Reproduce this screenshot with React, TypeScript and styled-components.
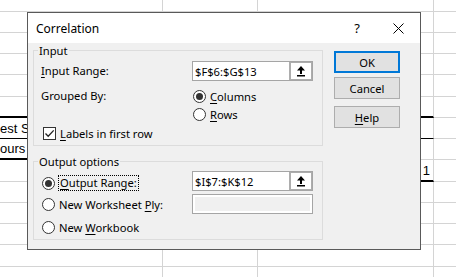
import React from 'react'
import styled, { createGlobalStyle } from 'styled-components'

const GlobalStyle = createGlobalStyle`
  html, body {
    margin: 0;
    padding: 0;
    background: #fff;
  }
  body {
    width: 456px;
    height: 277px;
    overflow: hidden;
  }
`

const Screen = styled.div`
  position: relative;
  width: 456px;
  height: 277px;
  overflow: hidden;
`

// spreadsheet behind the dialog
const Sheet = styled.div`
  display: grid;
  grid-template-columns: 163px 95px 176px 22px;
  grid-template-rows: 12px repeat(3, 21px 21px 21px 22px) 10px;
  font-family: "Liberation Sans", Arial, sans-serif;
  font-size: 13px;
  color: #000;
`

type Edge = 'grid' | 'thin' | 'thick' | 'none'

const Cell = styled.div<{ $edge: Edge; $last?: boolean; $right?: boolean }>`
  box-sizing: border-box;
  display: flex;
  align-items: flex-end;
  justify-content: ${p => (p.$right ? 'flex-end' : 'flex-start')};
  padding: 0 3px 2px 0;
  line-height: 15px;
  white-space: nowrap;
  overflow: hidden;
  border-right: ${p => (p.$last ? 'none' : '1px solid #d4d4d4')};
  border-bottom: ${p =>
    p.$edge === 'thick'
      ? '2px solid #000'
      : p.$edge === 'thin'
        ? '1px solid #000'
        : p.$edge === 'none'
          ? 'none'
          : '1px solid #d4d4d4'};
`

const Dialog = styled.div`
  position: absolute;
  left: 27px;
  top: 12px;
  width: 394px;
  height: 238px;
  box-sizing: border-box;
  border: 1px solid #595959;
  background: #f0f0f0;
  display: flex;
  flex-direction: column;
  font-family: "Noto Sans", "Open Sans", sans-serif;
  font-size: 11.2px;
  color: #000;
`

const TitleBar = styled.div`
  height: 30px;
  flex: none;
  background: #fff;
  display: flex;
  align-items: center;
  padding: 0 16px 0 8px;
  font-size: 12px;
`

const Title = styled.div`
  flex: 1;
`

const HelpMark = styled.div`
  margin-right: 33px;
  font-size: 13px;
`

const Body = styled.div`
  flex: 1;
  display: flex;
  padding: 0 0 0 5px;
`

const Options = styled.div`
  width: 290px;
  display: flex;
  flex-direction: column;
`

const Group = styled.fieldset`
  margin: 0;
  padding: 0 0 3px 7px;
  border: 1px solid #dcdcdc;
  min-width: 0;

  & + & {
    margin-top: 8px;
  }
`

const Caption = styled.legend`
  padding: 0 1px;
  margin-left: -3px;
  line-height: 15px;
`

const FieldRow = styled.div<{ $top?: number }>`
  display: grid;
  grid-template-columns: 151px 121px;
  align-items: center;
  margin-top: ${p => p.$top ?? 0}px;
`

const Label = styled.div<{ $h?: number }>`
  align-self: start;
  line-height: ${p => p.$h ?? 20}px;
`

const RangeBox = styled.div<{ $disabled?: boolean }>`
  box-sizing: border-box;
  width: 121px;
  height: 20px;
  border: 1px solid #a5a5a5;
  background: ${p => (p.$disabled ? '#f0f0f0' : '#fff')};
  box-shadow: ${p => (p.$disabled ? 'inset 0 0 0 2px #fff' : 'none')};
  display: flex;
  align-items: center;
`

const RangeText = styled.div`
  flex: 1;
  padding-left: 2px;
`

const RefButton = styled.div`
  box-sizing: border-box;
  width: 23px;
  height: 18px;
  border: 1px solid #adadad;
  border-left-width: 2px;
  background: #fff;
  display: flex;
  align-items: center;
  justify-content: center;
`

const Stack = styled.div`
  display: flex;
  flex-direction: column;
`

const BoxStack = styled(Stack)`
  align-self: start;
  gap: 3px;
  margin-top: 2px;
`

const Option = styled.div<{ $top?: number; $indent?: number }>`
  display: flex;
  align-items: center;
  height: 18px;
  gap: 4px;
  margin-top: ${p => p.$top ?? 0}px;
  margin-left: ${p => p.$indent ?? 0}px;
`

const Radio = styled.span<{ $on?: boolean }>`
  box-sizing: border-box;
  width: 13px;
  height: 13px;
  flex: none;
  border: 1px solid #333;
  border-radius: 50%;
  background: #fff;
  display: flex;
  align-items: center;
  justify-content: center;

  &::after {
    content: '';
    width: 7px;
    height: 7px;
    border-radius: 50%;
    background: ${p => (p.$on ? '#333' : 'transparent')};
  }
`

const Check = styled.span`
  box-sizing: border-box;
  width: 13px;
  height: 13px;
  flex: none;
  border: 1px solid #333;
  background: #fff;
  display: flex;
  align-items: center;
  justify-content: center;
`

const Focused = styled.span`
  outline: 1px dotted #000;
  outline-offset: 0;
  padding: 0 1px;
  line-height: 14px;
`

const Key = styled.span`
  text-decoration: underline;
  text-underline-offset: 2px;
  text-decoration-thickness: 1px;
`

const Buttons = styled.div`
  width: 66px;
  margin-left: 11px;
  padding-top: 8px;
  display: flex;
  flex-direction: column;
`

const Button = styled.div<{ $default?: boolean; $top?: number }>`
  box-sizing: border-box;
  height: 22px;
  margin-top: ${p => p.$top ?? 0}px;
  border: ${p => (p.$default ? '2px solid #0078d7' : '1px solid #adadad')};
  background: #e1e1e1;
  display: flex;
  align-items: center;
  justify-content: center;
`

const UpArrow = () => (
  <svg width="8" height="11" viewBox="0 0 8 11">
    <path d="M4 0 L8 4.5 L5 4.5 L5 8 L3 8 L3 4.5 L0 4.5 Z" fill="#000" />
    <rect x="0" y="9" width="8" height="1.5" fill="#000" />
  </svg>
)

const CloseIcon = () => (
  <svg width="11" height="11" viewBox="0 0 11 11">
    <path d="M0.5 0.5 L10.5 10.5 M10.5 0.5 L0.5 10.5" stroke="#000" strokeWidth="1" />
  </svg>
)

const Tick = () => (
  <svg width="11" height="11" viewBox="0 0 11 11">
    <path d="M1.5 5.5 L4.2 8.3 L9.7 2.4" stroke="#222" strokeWidth="1.3" fill="none" />
  </svg>
)

const ROWS = 14
const COLS = 4

const edges: Record<string, Edge> = {
  '5-0': 'thick',
  '6-0': 'thin',
  '7-0': 'thick',
  '5-2': 'thick',
  '6-2': 'thin',
  '8-2': 'thick',
}

const texts: Record<string, string> = {
  '6-0': 'est Scores',
  '7-0': 'ours Studied',
  '8-2': '1',
}

function App() {
  const cells = []
  for (let r = 0; r < ROWS; r++) {
    for (let c = 0; c < COLS; c++) {
      const key = `${r}-${c}`
      cells.push(
        <Cell
          key={key}
          $edge={r === ROWS - 1 ? 'none' : edges[key] ?? 'grid'}
          $last={c === COLS - 1}
          $right={c === 2}
        >
          {texts[key]}
        </Cell>
      )
    }
  }

  return (
    <Screen>
      <GlobalStyle />
      <Sheet>{cells}</Sheet>

      <Dialog>
        <TitleBar>
          <Title>Correlation</Title>
          <HelpMark>?</HelpMark>
          <CloseIcon />
        </TitleBar>

        <Body>
          <Options>
            <Group>
              <Caption>Input</Caption>
              <FieldRow $top={3}>
                <Label>
                  <Key>I</Key>nput Range:
                </Label>
                <RangeBox>
                  <RangeText>$F$6:$G$13</RangeText>
                  <RefButton>
                    <UpArrow />
                  </RefButton>
                </RangeBox>
              </FieldRow>
              <FieldRow $top={6}>
                <Label $h={18}>Grouped By:</Label>
                <Stack>
                  <Option $indent={1}>
                    <Radio $on />
                    <span>
                      <Key>C</Key>olumns
                    </span>
                  </Option>
                  <Option $indent={1}>
                    <Radio />
                    <span>
                      <Key>R</Key>ows
                    </span>
                  </Option>
                </Stack>
              </FieldRow>
              <Option $top={1} $indent={2}>
                <Check>
                  <Tick />
                </Check>
                <span>
                  <Key>L</Key>abels in first row
                </span>
              </Option>
            </Group>

            <Group>
              <Caption>Output options</Caption>
              <FieldRow>
                <Stack>
                  <Option $top={5} $indent={1}>
                    <Radio $on />
                    <Focused>
                      <Key>O</Key>utput Range:
                    </Focused>
                  </Option>
                  <Option $top={3} $indent={1}>
                    <Radio />
                    <span>
                      New Worksheet <Key>P</Key>ly:
                    </span>
                  </Option>
                  <Option $top={5} $indent={1}>
                    <Radio />
                    <span>
                      New <Key>W</Key>orkbook
                    </span>
                  </Option>
                </Stack>
                <BoxStack>
                  <RangeBox>
                    <RangeText>$I$7:$K$12</RangeText>
                    <RefButton>
                      <UpArrow />
                    </RefButton>
                  </RangeBox>
                  <RangeBox $disabled />
                </BoxStack>
              </FieldRow>
            </Group>
          </Options>

          <Buttons>
            <Button $default>OK</Button>
            <Button $top={4}>Cancel</Button>
            <Button $top={7}>
              <Key>H</Key>elp
            </Button>
          </Buttons>
        </Body>
      </Dialog>
    </Screen>
  )
}

export default App
